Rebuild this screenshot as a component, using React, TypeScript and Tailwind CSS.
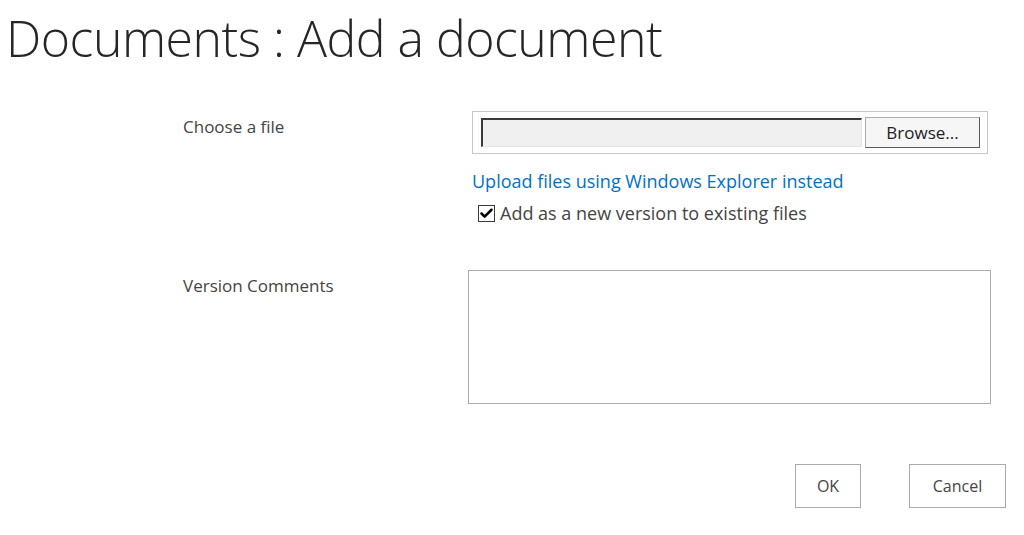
import { Check } from 'lucide-react';

export default function App() {
  return (
    <div className="w-[1024px] h-[535px] bg-white text-[#444] overflow-hidden" style={{ fontFamily: '"Open Sans", "Liberation Sans", sans-serif' }}>
      <h1 className="pl-[6px] pt-[8px] text-[50px] leading-[60px] font-light text-[#262626] tracking-[-0.5px]">
        Documents : Add a document
      </h1>

      <div className="mt-[47px] flex">
        <div className="w-[472px] shrink-0 pl-[183px] text-[17px] leading-[24px] text-[#444]">Choose a file</div>
        <div className="flex flex-col">
          <div className="mt-[-4px] w-[516px] h-[43px] border border-[#c6c6c6] flex items-center pl-[8px] pr-[7px] gap-[3px]">
            <div className="flex-1 h-[29px] bg-[#f0f0f0] border-l-2 border-t-2 border-[#3a3a3a] border-r border-r-[#e3e3e3] border-b border-b-[#e3e3e3]" />
            <button className="w-[115px] h-[31px] bg-[#f6f6f6] border border-[#adadad] border-r-[#5a5a5a] border-b-[#5a5a5a] text-[17px] text-[#222]">
              Browse...
            </button>
          </div>
          <a className="mt-[14px] text-[18px] leading-[26px] text-[#0072c6]">Upload files using Windows Explorer instead</a>
          <label className="mt-[7px] ml-[6px] flex items-center gap-[5px] text-[18px] leading-[24px] text-[#444]">
            <span className="w-[17px] h-[17px] border border-[#3a3a3a] bg-white flex items-center justify-center">
              <Check className="w-[15px] h-[15px] text-black" strokeWidth={4} />
            </span>
            Add as a new version to existing files
          </label>
        </div>
      </div>

      <div className="mt-[45px] flex">
        <div className="w-[468px] shrink-0 pl-[183px] pt-[4px] text-[17px] leading-[24px] text-[#444]">Version Comments</div>
        <textarea className="w-[523px] h-[134px] border border-[#ababab] resize-none outline-none" />
      </div>

      <div className="mt-[60px] flex justify-end gap-[48px] pr-[18px]">
        <button className="w-[66px] h-[44px] border border-[#ababab] bg-white text-[16px] text-[#444]">OK</button>
        <button className="w-[97px] h-[44px] border border-[#ababab] bg-white text-[16px] text-[#444]">Cancel</button>
      </div>
    </div>
  );
}
